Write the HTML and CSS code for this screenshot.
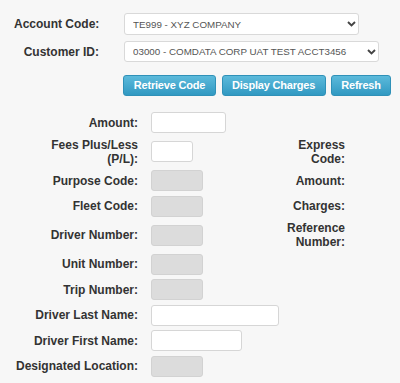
FILE: index.html
```html
<!DOCTYPE html>
<html>
<head>
<meta charset="utf-8">
<link rel="stylesheet" href="styles.css">
</head>
<body>
<div class="page">
  <div class="head">
    <div class="head-row">
      <label class="hlabel">Account Code:</label>
      <div class="select-wrap acct">
        <select class="sel"><option>TE999 - XYZ COMPANY</option></select>
        <svg class="chev" width="9" height="6" viewBox="0 0 9 6"><path d="M1 1 L4.5 4.5 L8 1" fill="none" stroke="#444" stroke-width="1.9"/></svg>
      </div>
    </div>
    <div class="head-row">
      <label class="hlabel">Customer ID:</label>
      <div class="select-wrap cust">
        <select class="sel"><option>03000 - COMDATA CORP UAT TEST ACCT3456</option></select>
        <svg class="chev" width="9" height="6" viewBox="0 0 9 6"><path d="M1 1 L4.5 4.5 L8 1" fill="none" stroke="#444" stroke-width="1.9"/></svg>
      </div>
    </div>
  </div>
  <div class="buttons">
    <button class="btn b1">Retrieve Code</button>
    <button class="btn b2">Display Charges</button>
    <button class="btn b3">Refresh</button>
  </div>
  <div class="form">
    <label class="lbl">Amount:</label>
    <div class="cell"><input class="inp w-amt" type="text"></div>

    <label class="lbl">Fees Plus/Less<br>(P/L):</label>
    <div class="cell"><input class="inp w-fee" type="text"></div>
    <label class="rlbl">Express<br>Code:</label>

    <label class="lbl">Purpose Code:</label>
    <div class="cell"><input class="inp dis w-sm" type="text" disabled></div>
    <label class="rlbl">Amount:</label>

    <label class="lbl">Fleet Code:</label>
    <div class="cell"><input class="inp dis w-sm" type="text" disabled></div>
    <label class="rlbl">Charges:</label>

    <label class="lbl">Driver Number:</label>
    <div class="cell"><input class="inp dis w-sm" type="text" disabled></div>
    <label class="rlbl">Reference<br>Number:</label>

    <label class="lbl">Unit Number:</label>
    <div class="cell"><input class="inp dis w-sm" type="text" disabled></div>

    <label class="lbl">Trip Number:</label>
    <div class="cell"><input class="inp dis w-sm" type="text" disabled></div>

    <label class="lbl">Driver Last Name:</label>
    <div class="cell"><input class="inp w-last" type="text"></div>

    <label class="lbl">Driver First Name:</label>
    <div class="cell"><input class="inp w-first" type="text"></div>

    <label class="lbl">Designated Location:</label>
    <div class="cell"><input class="inp dis w-sm" type="text" disabled></div>
  </div>
</div>
</body>
</html>
```

FILE: styles.css
```css
html, body {
  margin: 0;
  padding: 0;
  background: #f7f7f7;
}
body {
  font-family: "Liberation Sans", Arial, sans-serif;
  color: #333;
  width: 400px;
  height: 383px;
  overflow: hidden;
}
.page {
  padding: 13px 0 0 14px;
}
.head {
  display: flex;
  flex-direction: column;
  gap: 6px;
}
.head-row {
  display: flex;
  align-items: center;
}
.hlabel {
  width: 85px;
  margin-right: 25px;
  text-align: right;
  font-size: 12px;
  font-weight: bold;
  line-height: 14px;
  white-space: nowrap;
}
.select-wrap {
  position: relative;
  height: 22px;
}
.select-wrap.acct { width: 235px; }
.select-wrap.cust { width: 255px; height: 21px; }
.sel {
  appearance: none;
  -webkit-appearance: none;
  box-sizing: border-box;
  width: 100%;
  height: 100%;
  margin: 0;
  padding: 0 0 0 8px;
  border: 1px solid #d9d9d9;
  border-radius: 3px;
  background: #fff;
  color: #555;
  font-family: "Liberation Sans", Arial, sans-serif;
  font-size: 9.8px;
  outline: none;
}
.chev {
  position: absolute;
  right: 3px;
  top: 8px;
  pointer-events: none;
}
.buttons {
  display: flex;
  gap: 5.5px;
  margin: 13px 0 0 109px;
}
.btn {
  box-sizing: border-box;
  height: 21px;
  padding: 0 4px;
  margin: 0;
  border: 1px solid #2f91b8;
  border-radius: 3px;
  background: linear-gradient(#5cbadb, #3199c2);
  color: #fff;
  font-family: "Liberation Sans", Arial, sans-serif;
  font-size: 11px;
  font-weight: bold;
  letter-spacing: -0.2px;
  line-height: 19px;
  white-space: nowrap;
}
.b1 { width: 93px; }
.b2 { width: 104px; }
.b3 { width: 60px; }
.form {
  display: grid;
  grid-template-columns: 124px 123px 58px;
  column-gap: 13px;
  row-gap: 4.5px;
  align-items: center;
  margin-top: 16px;
}
.lbl {
  grid-column: 1;
  text-align: right;
  font-size: 12px;
  font-weight: bold;
  line-height: 14px;
  white-space: nowrap;
}
.rlbl {
  grid-column: 3;
  text-align: right;
  font-size: 12px;
  font-weight: bold;
  line-height: 14px;
  white-space: nowrap;
}
.cell {
  grid-column: 2;
  display: flex;
  align-items: center;
}
.inp {
  box-sizing: border-box;
  height: 21px;
  margin: 0;
  padding: 0 4px;
  border: 1px solid #d6d6d6;
  border-radius: 3px;
  background: #fff;
  font-family: "Liberation Sans", Arial, sans-serif;
  font-size: 12px;
  outline: none;
}
.inp.dis {
  background: #dcdcdc;
  border-color: #d2d2d2;
}
.w-amt { width: 75px; }
.w-fee { width: 42px; }
.w-sm { width: 52px; flex: none; }
.w-last { width: 128px; flex: none; }
.w-first { width: 91px; }
```
